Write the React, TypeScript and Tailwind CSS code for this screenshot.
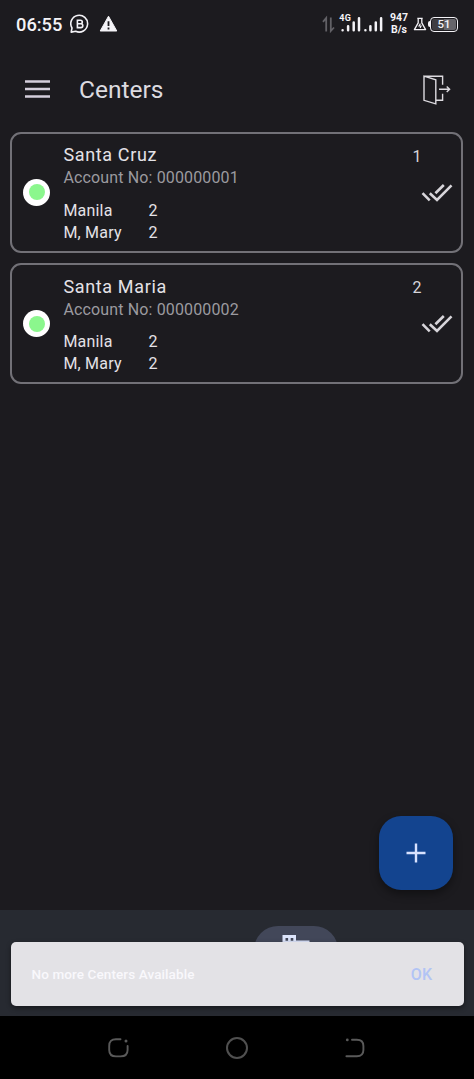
import React from 'react';

interface Center {
  id: number;
  name: string;
  accountNo: string;
  office: string;
  staff: string;
}

const centers: Center[] = [
  { id: 1, name: 'Santa Cruz', accountNo: '000000001', office: 'Manila', staff: 'M, Mary' },
  { id: 2, name: 'Santa Maria', accountNo: '000000002', office: 'Manila', staff: 'M, Mary' },
];

function StatusBar() {
  return (
    <div className="flex h-12 items-center justify-between pl-4 pr-4 text-[#f4f3f7]">
      <div className="flex items-center">
        <span className="w-[47px] whitespace-nowrap pt-px text-[18.3px] font-medium leading-6">06:55</span>
        {/* Business chat */}
        <svg className="ml-[7px] h-5 w-5" viewBox="0 0 20 20" fill="none" stroke="currentColor">
          <path
            d="M1.2 18.1L2 14A8.4 8.4 0 1 1 5.7 17.3Z"
            strokeWidth="1.6"
            strokeLinejoin="round"
          />
          <path
            d="M7.4 6.2h3.1a1.8 1.8 0 0 1 0 3.6H7.4zM7.4 9.8h3.5a1.9 1.9 0 0 1 0 3.8H7.4z"
            strokeWidth="1.6"
          />
        </svg>
        {/* Warning */}
        <svg className="ml-[9px] h-[18px] w-[19px]" viewBox="0 0 19 18">
          <path d="M9.5 1.2L17.8 16H1.2z" fill="currentColor" stroke="currentColor" strokeLinejoin="round" />
          <path d="M9.5 6.3v4.8M9.5 12.6v1.8" stroke="#1c1b1f" strokeWidth="1.8" />
        </svg>
      </div>

      <div className="flex items-center">
        <svg className="h-5 w-[62px]" viewBox="322 14 62 20" fill="none">
          <path d="M323 21.8L326.2 18V31.5M330.8 17.5V31L334 27.5" stroke="#626166" strokeWidth="1.8" />
          <text
            x="339.3"
            y="21.4"
            fill="currentColor"
            className="text-[9px] font-bold"
            textLength="11.5"
          >
            4G
          </text>
          <g stroke="currentColor" strokeWidth="2.5" strokeLinecap="round">
            <path d="M342.6 30.2v.1M348.1 26.2v4.1M353.7 22.4v7.9M359 18.2v12.1" />
            <path d="M365.4 30.2v.1M370.4 26.2v4.1M375.8 22.4v7.9M381.1 18.2v12.1" />
          </g>
        </svg>
        <div className="ml-[5px] w-5 text-center text-[10.5px] font-bold leading-[12.5px]">
          <div>947</div>
          <div>B/s</div>
        </div>
        {/* Flask */}
        <svg className="ml-[4px] h-4 w-[14px]" viewBox="0 0 14 16" fill="none" stroke="currentColor">
          <path d="M4.3 2.3h5.4M5.2 2.3v4.6L1.4 13.6h11.2L8.8 6.9V2.3" strokeWidth="1.3" strokeLinejoin="round" />
          <path d="M7.4 7.6L6 10h2.1l-1 2" strokeWidth="1.1" />
        </svg>
        {/* Battery */}
        <div className="ml-px flex items-center">
          <div className="h-[6px] w-[2px] rounded-l bg-[#f4f3f7]" />
          <div className="flex h-[15px] w-[28px] items-center justify-center rounded border border-[#f4f3f7] bg-gradient-to-r from-[#3f3e42] from-50% to-[#66656a] to-50% bg-clip-content p-px">
            <span className="pt-px text-[11.5px] font-medium leading-none">51</span>
          </div>
        </div>
      </div>
    </div>
  );
}

function TopBar() {
  return (
    <header className="flex h-[83px] items-center pl-[24.5px] pr-[23px] text-[#dddbe0]">
      <button aria-label="Open menu" className="pb-px">
        <svg className="h-[18px] w-[25px]" viewBox="0 0 25 18" stroke="#d4cedb" strokeWidth="2.5">
          <path d="M0 1.5h25M0 9h25M0 16.5h25" />
        </svg>
      </button>
      <h1 className="ml-[29.5px] mt-px flex-1 text-[24.5px] leading-8">Centers</h1>
      <button aria-label="Log out">
        <svg className="h-[30px] w-7" viewBox="0 0 28 30" fill="none" stroke="currentColor" strokeWidth="1.4">
          <path d="M1 1.2L12.8 4.8v24L1 25.3zM1 1.2h18.6v8.5M12.8 25.2h6.8v-6.5" />
          <path d="M16 14.2h10.3M23.7 11.5l2.9 2.7-2.9 2.7" />
        </svg>
      </button>
    </header>
  );
}

function CenterCard({ center }: { center: Center }) {
  return (
    <div className="flex h-[121px] rounded-[11px] border-2 border-[#727177] pl-[11px]">
      <div className="h-[27px] w-[27px] shrink-0 self-center rounded-full bg-white p-[5.5px]">
        <div className="h-full w-full rounded-full bg-[#8bf78d]" />
      </div>
      <div className="ml-[13px] flex-1 pt-[9.5px] text-[16px] leading-[22px] text-[#e4e2e7]">
        <div className="text-[18px] leading-6 tracking-[0.65px]">{center.name}</div>
        <div className="tracking-[0.14px] text-[#9b9a9f]">Account No: {center.accountNo}</div>
        <div className="mt-[10.5px] grid grid-cols-[85px_1fr] tracking-[0.2px]">
          <span>{center.office}</span>
          <span>2</span>
          <span>{center.staff}</span>
          <span>2</span>
        </div>
      </div>
      <div className="flex w-[49px] shrink-0 flex-col pt-[12px] text-[#d7d5da]">
        <span className="text-[16px] leading-[22px]">{center.id}</span>
        <svg
          className="ml-[8.5px] mt-[14px] h-[22px] w-[32px]"
          viewBox="0 0 32 22"
          fill="none"
          stroke="currentColor"
          strokeWidth="2.6"
        >
          <path d="M1.5 11.2l7.2 7.2M8.8 11.2l7.2 6.8L30.5 3.3M14.4 11.2L22.8 3" />
        </svg>
      </div>
    </div>
  );
}

function BottomNavigation() {
  return (
    <div className="relative h-[106px] bg-[#272a31]">
      <div className="ml-[254px] flex h-[48px] translate-y-4 w-[84px] justify-center rounded-full bg-[#424759] pt-[9px]">
        <svg className="h-[24px] w-[28px]" viewBox="0 0 28 24">
          <path d="M.5 0h13.5v5.5h13.5V24H.5z" fill="#dce4fb" />
          <path
            d="M3.5 3h2.6v2.7H3.5zM8.7 3h2.6v2.7H8.7zM3.5 8.5h2.6v3H3.5zM8.7 8.5h2.6v3H8.7zM15 9h9v12h-9z"
            fill="#424759"
          />
        </svg>
      </div>

      {/* Snackbar */}
      <div className="absolute left-[10.5px] right-[10.5px] top-[32px] flex h-[63.5px] items-center justify-between rounded-[5px] bg-[#e3e2e6] pl-[21px] pr-[31.5px] shadow-[0_2px_5px_rgba(0,0,0,0.45)]">
        <span className="pt-px text-[13.5px] font-medium tracking-[0.1px] text-[#f9f8fc]">
          No more Centers Available
        </span>
        <button className="pt-0.5 text-[16px] font-medium text-[#b2c4f5]">OK</button>
      </div>
    </div>
  );
}

function SystemNavigation() {
  return (
    <div className="flex h-[63px] items-center justify-between bg-black px-[107px] text-[#5a5a5a]">
      <svg className="h-6 w-6" viewBox="0 0 24 24" fill="none" stroke="currentColor" strokeWidth="1.9">
        <path
          d="M13.5 3.2H9Q2.2 3.2 2.2 10v4Q2.2 20.4 9 20.4h4.5Q20.6 20.4 20.6 14v-4"
          strokeLinecap="round"
        />
        <circle cx="19" cy="4.9" r="1.5" fill="currentColor" stroke="none" />
      </svg>
      <div className="h-[22px] w-[22px] rounded-full border-2 border-[#505050]" />
      <svg className="h-6 w-6" viewBox="0 0 24 24" fill="none" stroke="currentColor" strokeWidth="1.9">
        <path d="M9 3.7h4.8Q20.4 3.7 20.4 10v4Q20.4 20.2 13.8 20.2H3.4" strokeLinecap="round" />
        <circle cx="4.3" cy="3.9" r="1.4" fill="currentColor" stroke="none" />
      </svg>
    </div>
  );
}

export default function App() {
  return (
    <div className="relative flex h-[1079px] w-[474px] flex-col overflow-hidden bg-[#1c1b1f] font-['Roboto',sans-serif]">
      <StatusBar />
      <TopBar />
      <main className="flex flex-1 flex-col gap-[10.5px] pl-[10.4px] pr-[10.6px] pt-[0.5px]">
        {centers.map(center => (
          <CenterCard key={center.id} center={center} />
        ))}
      </main>

      {/* Create center */}
      <button
        aria-label="Create center"
        className="absolute bottom-[189.5px] right-[21px] flex h-[74px] w-[74px] items-center justify-center rounded-[22px] bg-[#13448f] shadow-[0_4px_8px_rgba(0,0,0,0.4)]"
      >
        <svg className="h-5 w-5" viewBox="0 0 20 20" stroke="#d8e2ff" strokeWidth="2.4">
          <path d="M10 .5v19M.5 10h19" />
        </svg>
      </button>

      <BottomNavigation />
      <SystemNavigation />
    </div>
  );
}
